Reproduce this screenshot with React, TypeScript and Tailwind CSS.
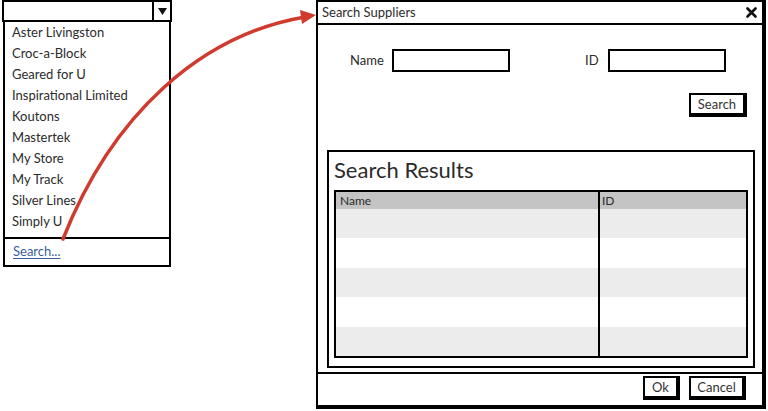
import React from "react";

const suppliers = [
  "Aster Livingston",
  "Croc-a-Block",
  "Geared for U",
  "Inspirational Limited",
  "Koutons",
  "Mastertek",
  "My Store",
  "My Track",
  "Silver Lines",
  "Simply U",
];

const rows = [0, 1, 2, 3, 4];

function SketchButton({ label, width }: { label: string; width: string }) {
  return (
    <button
      className={`${width} h-[24px] border-2 border-r-[4px] border-b-[4px] border-black bg-white text-[13px] text-[#333] flex items-center justify-center leading-none`}
    >
      {label}
    </button>
  );
}

export default function App() {
  return (
    <div
      className="relative w-[768px] h-[411px] bg-white flex overflow-hidden text-[#2b2b2b]"
      style={{ fontFamily: "Lato, 'Open Sans', sans-serif" }}
    >
      {/* supplier combo box with its open list */}
      <div className="w-[174px] pl-[2px] flex flex-col">
        <div className="h-[22px] w-[170px] border-2 border-black flex justify-end">
          <div className="w-[18px] border-l-2 border-black flex items-center justify-center">
            <svg width="9" height="7" viewBox="0 0 9 7">
              <polygon points="0,0 9,0 4.5,7" fill="#111" />
            </svg>
          </div>
        </div>
        <div className="ml-[1px] w-[168px] h-[245px] border-2 border-t-0 border-black flex flex-col">
          <ul className="flex flex-col">
            {suppliers.map((s) => (
              <li key={s} className="h-[21px] pl-[7px] text-[13px] leading-[21px]">
                {s}
              </li>
            ))}
          </ul>
          <div className="mt-[5px] border-t-2 border-black pl-[8px] leading-[22px]">
            <span className="text-[13px] text-[#3b5f9a] underline underline-offset-2">
              Search...
            </span>
          </div>
        </div>
      </div>

      {/* dialog */}
      <div className="ml-[142px] w-[450px] h-[409px] border-2 border-r-4 border-b-4 border-black flex flex-col">
        <div className="h-[23px] border-b-2 border-black flex items-center justify-between pl-[4px] pr-[5px]">
          <span className="text-[13px]">Search Suppliers</span>
          <svg width="11" height="11" viewBox="0 0 11 11">
            <path d="M1.5 1.5 L9.5 9.5 M9.5 1.5 L1.5 9.5" stroke="#111" strokeWidth="2.6" strokeLinecap="round" />
          </svg>
        </div>

        <div className="mt-[24px] pl-[32px] flex items-center h-[23px]">
          <span className="w-[42px] text-[13px]">Name</span>
          <div className="w-[118px] h-[23px] border-2 border-black" />
          <span className="ml-[75px] w-[23px] text-[13px]">ID</span>
          <div className="w-[118px] h-[23px] border-2 border-black" />
        </div>

        <div className="mt-[21px] flex justify-end pr-[15px]">
          <SketchButton label="Search" width="w-[58px]" />
        </div>

        <div className="mt-[33px] ml-[9px] mr-[7px] h-[218px] border-2 border-black flex flex-col px-[5px] pt-[5px]">
          <h2 className="text-[22px] leading-[26px]">Search Results</h2>
          <div className="mt-[7px] h-[168px] border-2 border-black flex">
            <div className="flex-1 flex flex-col border-r-2 border-black">
              <div className="h-[17px] bg-[#c4c4c4] text-[12px] leading-[17px] pl-[4px]">Name</div>
              {rows.map((r) => (
                <div key={r} className={`h-[29.5px] ${r % 2 === 0 ? "bg-[#ececec]" : "bg-white"}`} />
              ))}
            </div>
            <div className="w-[146px] flex flex-col">
              <div className="h-[17px] bg-[#c4c4c4] text-[12px] leading-[17px] pl-[2px]">ID</div>
              {rows.map((r) => (
                <div key={r} className={`h-[29.5px] ${r % 2 === 0 ? "bg-[#ececec]" : "bg-white"}`} />
              ))}
            </div>
          </div>
        </div>

        <div className="mt-[4px] flex-1 border-t-2 border-black flex justify-end items-start pt-[2px] pr-[16px] gap-[9px]">
          <SketchButton label="Ok" width="w-[37px]" />
          <SketchButton label="Cancel" width="w-[57px]" />
        </div>
      </div>

      {/* red connector arrow over everything */}
      <svg className="absolute left-0 top-0 pointer-events-none" width="768" height="411">
        <path d="M63 239 C 112 115, 200 35, 305 17" fill="none" stroke="#cf3b2e" strokeWidth="3.5" strokeLinecap="round" />
        <polygon points="316,15 302,24 300,10" fill="#cf3b2e" />
      </svg>
    </div>
  );
}
